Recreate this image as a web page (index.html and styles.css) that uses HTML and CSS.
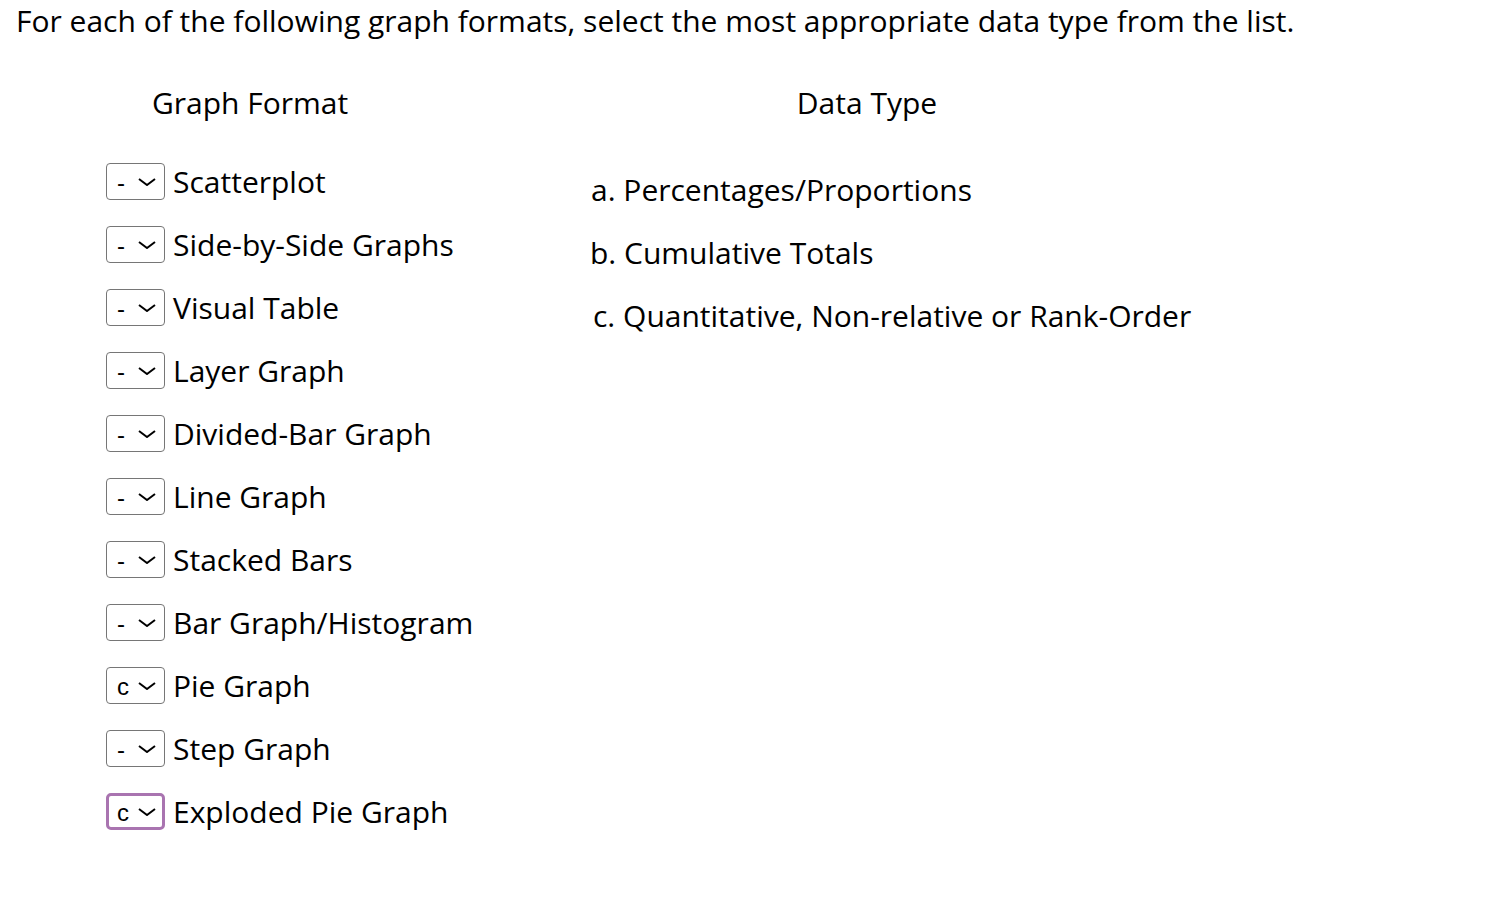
FILE: index.html
```html
<!DOCTYPE html>
<html lang="en">
<head>
<meta charset="utf-8">
<title>Graph formats</title>
<link rel="stylesheet" href="styles.css">
</head>
<body>
<p class="prompt">For each of the following graph formats, select the most appropriate data type from the list.</p>
<div class="headers">
  <div class="head-left">Graph Format</div>
  <div class="head-right">Data Type</div>
</div>
<div class="body">
  <div class="formats">
    <div class="row"><div class="sel"><span class="val">-</span><svg class="chev" viewBox="0 0 18 8"><path d="M1 1 L9 7 L17 1"/></svg></div><span class="label">Scatterplot</span></div>
    <div class="row"><div class="sel"><span class="val">-</span><svg class="chev" viewBox="0 0 18 8"><path d="M1 1 L9 7 L17 1"/></svg></div><span class="label">Side-by-Side Graphs</span></div>
    <div class="row"><div class="sel"><span class="val">-</span><svg class="chev" viewBox="0 0 18 8"><path d="M1 1 L9 7 L17 1"/></svg></div><span class="label">Visual Table</span></div>
    <div class="row"><div class="sel"><span class="val">-</span><svg class="chev" viewBox="0 0 18 8"><path d="M1 1 L9 7 L17 1"/></svg></div><span class="label">Layer Graph</span></div>
    <div class="row"><div class="sel"><span class="val">-</span><svg class="chev" viewBox="0 0 18 8"><path d="M1 1 L9 7 L17 1"/></svg></div><span class="label">Divided-Bar Graph</span></div>
    <div class="row"><div class="sel"><span class="val">-</span><svg class="chev" viewBox="0 0 18 8"><path d="M1 1 L9 7 L17 1"/></svg></div><span class="label">Line Graph</span></div>
    <div class="row"><div class="sel"><span class="val">-</span><svg class="chev" viewBox="0 0 18 8"><path d="M1 1 L9 7 L17 1"/></svg></div><span class="label">Stacked Bars</span></div>
    <div class="row"><div class="sel"><span class="val">-</span><svg class="chev" viewBox="0 0 18 8"><path d="M1 1 L9 7 L17 1"/></svg></div><span class="label">Bar Graph/Histogram</span></div>
    <div class="row"><div class="sel"><span class="val">c</span><svg class="chev" viewBox="0 0 18 8"><path d="M1 1 L9 7 L17 1"/></svg></div><span class="label">Pie Graph</span></div>
    <div class="row"><div class="sel"><span class="val">-</span><svg class="chev" viewBox="0 0 18 8"><path d="M1 1 L9 7 L17 1"/></svg></div><span class="label">Step Graph</span></div>
    <div class="row"><div class="sel focused"><span class="val">c</span><svg class="chev" viewBox="0 0 18 8"><path d="M1 1 L9 7 L17 1"/></svg></div><span class="label">Exploded Pie Graph</span></div>
  </div>
  <div class="types">
    <div class="type a">a. Percentages/Proportions</div>
    <div class="type b">b. Cumulative Totals</div>
    <div class="type c">c. Quantitative, Non-relative or Rank-Order</div>
  </div>
</div>
</body>
</html>
```

FILE: styles.css
```css
html, body {
  margin: 0;
  padding: 0;
  background: #fff;
}
body {
  font-family: "Open Sans", "Liberation Sans", sans-serif;
  font-size: 30px;
  color: #000;
}
.prompt {
  margin: 0;
  padding: 0 0 0 16px;
  line-height: 42px;
}
.headers {
  display: flex;
  margin-top: 40px;
  line-height: 42px;
}
.head-left {
  width: 286px;
  margin-left: 107px;
  text-align: center;
}
.head-right {
  width: 554px;
  margin-left: 197px;
  text-align: center;
}
.body {
  display: flex;
  margin-top: 26px;
}
.formats {
  display: flex;
  flex-direction: column;
  margin-left: 106px;
  width: 484px;
}
.row {
  display: flex;
  align-items: center;
  height: 63px;
  gap: 8px;
}
.sel {
  box-sizing: border-box;
  width: 59px;
  height: 37px;
  border: 1px solid #767676;
  border-radius: 4px;
  display: flex;
  align-items: center;
  padding-left: 10px;
  padding-top: 2px;
  font-family: "Liberation Sans", "DejaVu Sans", sans-serif;
  font-size: 24px;
  line-height: 1;
}
.sel .val {
  width: 21px;
  flex: none;
}
.sel.focused {
  border: 3px solid #a974b0;
  border-radius: 5px;
  padding-left: 8px;
}
.chev {
  flex: none;
  width: 18px;
  height: 8px;
  margin-top: -2px;
  fill: none;
  stroke: #000;
  stroke-width: 2;
}
.label {
  line-height: 42px;
  white-space: nowrap;
}
.types {
  display: flex;
  flex-direction: column;
  padding-top: 8px;
}
.type {
  height: 63px;
  line-height: 63px;
  white-space: nowrap;
}
.type.a { padding-left: 1px; }
.type.c { padding-left: 3px; }
```
